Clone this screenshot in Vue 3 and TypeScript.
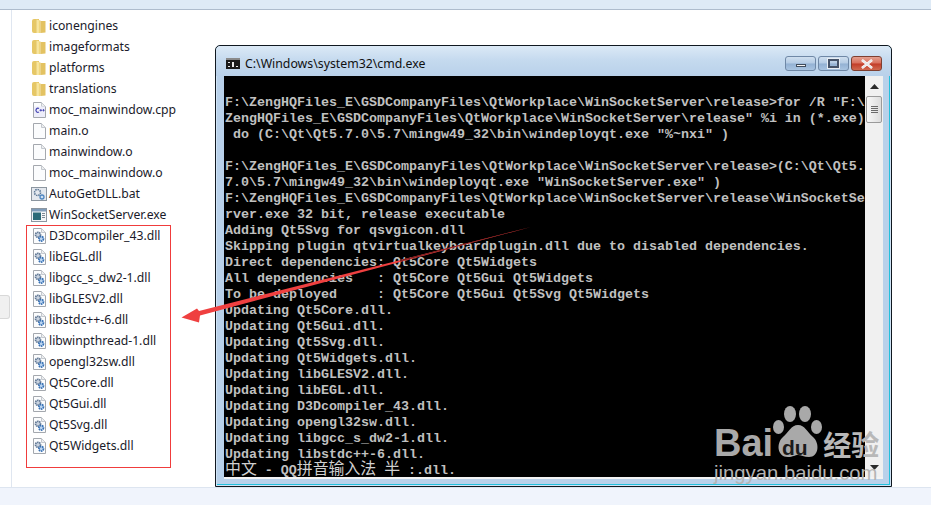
<script setup lang="ts">
type Kind = 'folder' | 'cpp' | 'blank' | 'bat' | 'exe' | 'dll'
interface Entry { name: string; kind: Kind }

const plainFiles: Entry[] = [
  { name: 'iconengines', kind: 'folder' },
  { name: 'imageformats', kind: 'folder' },
  { name: 'platforms', kind: 'folder' },
  { name: 'translations', kind: 'folder' },
  { name: 'moc_mainwindow.cpp', kind: 'cpp' },
  { name: 'main.o', kind: 'blank' },
  { name: 'mainwindow.o', kind: 'blank' },
  { name: 'moc_mainwindow.o', kind: 'blank' },
  { name: 'AutoGetDLL.bat', kind: 'bat' },
  { name: 'WinSocketServer.exe', kind: 'exe' },
]
const dllFiles: Entry[] = [
  'D3Dcompiler_43.dll', 'libEGL.dll', 'libgcc_s_dw2-1.dll', 'libGLESV2.dll', 'libstdc++-6.dll',
  'libwinpthread-1.dll', 'opengl32sw.dll', 'Qt5Core.dll', 'Qt5Gui.dll', 'Qt5Svg.dll', 'Qt5Widgets.dll',
].map((name) => ({ name, kind: 'dll' as Kind }))

const base = 'F:\\ZengHQFiles_E\\GSDCompanyFiles\\QtWorkplace\\WinSocketServer\\release'
const consoleLines: string[] = [
  '',
  base + '>for /R "F:\\',
  'ZengHQFiles_E\\GSDCompanyFiles\\QtWorkplace\\WinSocketServer\\release" %i in (*.exe)',
  ' do (C:\\Qt\\Qt5.7.0\\5.7\\mingw49_32\\bin\\windeployqt.exe "%~nxi" )',
  '',
  base + '>(C:\\Qt\\Qt5.',
  '7.0\\5.7\\mingw49_32\\bin\\windeployqt.exe "WinSocketServer.exe" )',
  base + '\\WinSocketSe',
  'rver.exe 32 bit, release executable',
  'Adding Qt5Svg for qsvgicon.dll',
  'Skipping plugin qtvirtualkeyboardplugin.dll due to disabled dependencies.',
  'Direct dependencies: Qt5Core Qt5Widgets',
  'All dependencies   : Qt5Core Qt5Gui Qt5Widgets',
  'To be deployed     : Qt5Core Qt5Gui Qt5Svg Qt5Widgets',
  'Updating Qt5Core.dll.',
  'Updating Qt5Gui.dll.',
  'Updating Qt5Svg.dll.',
  'Updating Qt5Widgets.dll.',
  'Updating libGLESV2.dll.',
  'Updating libEGL.dll.',
  'Updating D3Dcompiler_43.dll.',
  'Updating opengl32sw.dll.',
  'Updating libgcc_s_dw2-1.dll.',
  'Updating libstdc++-6.dll.',
]
</script>

<template>
  <div class="page">
    <div class="top-strip"></div>
    <div class="explorer">
      <div class="nav-pane"><div class="nav-knob"></div></div>
      <div class="file-pane">
        <template v-for="group in [plainFiles, dllFiles]" :key="group[0].name">
          <div :class="group === dllFiles ? 'dll-box' : 'plain-list'">
            <div v-for="f in group" :key="f.name" class="row">
              <svg class="icon" viewBox="0 0 16 16" width="16" height="16">
                <defs>
                  <linearGradient id="folderFill" x1="0" x2="1" y1="0" y2="0">
                    <stop offset="0" stop-color="#e9cd72" />
                    <stop offset="0.45" stop-color="#fbeeb2" />
                    <stop offset="0.6" stop-color="#f6e08e" />
                    <stop offset="1" stop-color="#e6c868" />
                  </linearGradient>
                </defs>
                <template v-if="f.kind === 'folder'">
                  <path d="M1 3 Q1 1 3 1 L8 1 L8 15 L3 15 Q1 15 1 13 Z" fill="#e6c766" />
                  <path d="M5 1.5 L9.5 2.5 L9.5 15 L5 15 Z" fill="url(#folderFill)" />
                  <path d="M9.5 3 L14.5 3 L14.5 14.5 L9.5 15 Z" fill="#e3c262" />
                </template>
                <template v-else-if="f.kind === 'bat'">
                  <rect x="0.5" y="1.5" width="15" height="13" fill="#e4e8ee" stroke="#8c96a0" />
                  <circle cx="6.5" cy="6.5" r="3" fill="none" stroke="#5c7896" stroke-width="1.6" stroke-dasharray="1.5 0.8" />
                  <circle cx="11" cy="11" r="2" fill="#d0e0f2" stroke="#4f86c0" stroke-width="1.3" />
                </template>
                <template v-else-if="f.kind === 'exe'">
                  <rect x="0.5" y="1.5" width="15" height="13" fill="#f4f6f8" stroke="#8c96a0" />
                  <rect x="1" y="2" width="14" height="2.5" fill="#7f9cba" />
                  <rect x="2" y="5.5" width="8" height="7.5" fill="#2c6a78" />
                  <path d="M11 6.5h3M11 8.5h3M11 10.5h3" stroke="#7c8894" />
                </template>
                <template v-else>
                  <path d="M2.5 0.5 H10.5 L14.5 4.5 V15.5 H2.5 Z" fill="#fbfcfd" stroke="#a4a8ae" />
                  <path d="M10.5 0.5 V4.5 H14.5" fill="#eceef0" stroke="#c4c8ce" />
                  <template v-if="f.kind === 'cpp'">
                    <rect x="3" y="4.5" width="11" height="10.5" fill="#eeeefa" />
                    <path d="M8 6.6 A2 2 0 1 0 8 10" fill="none" stroke="#4646b4" stroke-width="1.2" />
                    <path d="M8.6 8.3h2.4M9.8 7.2v2.2M11.4 8.3h2.2M12.5 7.2v2.2" stroke="#4646b4" />
                  </template>
                  <template v-else-if="f.kind === 'dll'">
                    <circle cx="7" cy="6.8" r="2.5" fill="#c9d3e0" stroke="#5f7692" stroke-width="1.7" stroke-dasharray="1.5 0.6" />
                    <circle cx="10.2" cy="10.8" r="2.3" fill="#bcd5f0" stroke="#3670b4" stroke-width="1.7" stroke-dasharray="1.5 0.6" />
                  </template>
                </template>
              </svg>
              <span class="name">{{ f.name }}</span>
            </div>
          </div>
        </template>
      </div>
    </div>
    <div class="status-strip"></div>

    <section class="cmd">
      <header class="cmd-title">
        <svg class="cmd-icon" viewBox="0 0 14 11" width="14" height="11">
          <rect width="14" height="11" fill="#1a1a1a" />
          <rect x="0" y="0" width="14" height="2" fill="#8a8a8a" />
          <path d="M2 4h2v1H2v3h2v1H2M6 4h2v5H6zM10 8h2v1h-2z" fill="#e8e8e8" />
        </svg>
        <span class="cmd-caption">C:\Windows\system32\cmd.exe</span>
        <div class="cmd-buttons">
          <div class="win-btn">
            <span class="glyph-min"></span>
          </div>
          <div class="win-btn">
            <span class="glyph-max"></span>
          </div>
          <div class="win-btn win-close">
            <svg viewBox="0 0 14 10" width="14" height="10">
              <path d="M2 1 L12 9 M12 1 L2 9" stroke="#fff" stroke-width="2.6" />
              <path d="M2 1 L12 9 M12 1 L2 9" stroke="#e8e8e8" stroke-width="1.6" />
            </svg>
          </div>
        </div>
      </header>
      <div class="cmd-client">
        <div class="cmd-text">
          <div v-for="(line, i) in consoleLines" :key="i" class="cmd-line">{{ line }}</div>
          <div class="cmd-line ime"><span class="cjk">中文</span> - QQ<span class="cjk">拼音输入法</span> <span class="cjk">半</span> :.dll.</div>
        </div>
        <div class="scrollbar">
          <svg class="sb-arrow" viewBox="0 0 9 5" width="9" height="5"><path d="M4.5 0 L9 5 H0 Z" fill="#2a2a2a" /></svg>
          <div class="sb-thumb">
            <span></span><span></span><span></span><span></span>
          </div>
          <div class="sb-track"></div>
          <svg class="sb-arrow" viewBox="0 0 9 5" width="9" height="5"><path d="M0 0 H9 L4.5 5 Z" fill="#2a2a2a" /></svg>
        </div>
      </div>
    </section>

    <svg class="annot" viewBox="0 0 931 505" width="931" height="505">
      <polygon points="531,227 199,311 197,308.5 181.5,317.5 199,322.5 200,315.5" fill="#ef4040" />
      <polygon points="531,227 400,260 400,261.5" fill="#7c2020" />
    </svg>

    <div class="watermark">
      <div class="wm-logo">
        <span class="wm-bai">Bai</span>
        <svg class="wm-paw" viewBox="0 0 50 54" width="50" height="54">
          <ellipse cx="17" cy="8" rx="6" ry="8" fill="#a9a9a9" />
          <ellipse cx="32" cy="8" rx="6" ry="8" fill="#a9a9a9" />
          <ellipse cx="5.5" cy="21" rx="5.5" ry="7" fill="#a9a9a9" />
          <ellipse cx="43.5" cy="21" rx="5.5" ry="7" fill="#a9a9a9" />
          <path d="M25 19 C18 19 16 26 10 31 C3 37 4 51 15 51 C20 51 22 49 25 49 C28 49 31 51 36 51 C46 51 47 37 40 31 C34 26 32 19 25 19 Z" fill="#a9a9a9" />
        </svg>
        <span class="wm-du">du</span>
        <span class="wm-cn">经验</span>
      </div>
      <div class="wm-url">jingyan.baidu.com</div>
    </div>
  </div>
</template>

<style>
html, body { margin: 0; padding: 0; background: #fff; }
</style>

<style scoped>
.page {
  position: relative;
  width: 931px;
  height: 505px;
  overflow: hidden;
  display: flex;
  flex-direction: column;
  background: #fff;
  font-family: "Noto Sans", "Liberation Sans", sans-serif;
}
.top-strip {
  height: 9px;
  background: #deeaf6;
  border-bottom: 1px solid #aebccd;
}
.explorer { flex: 1; display: flex; min-height: 0; }
.nav-pane {
  width: 11px;
  border-right: 1px solid #dfe6f0;
  padding-top: 285px;
  box-sizing: content-box;
}
.nav-knob {
  width: 9px;
  height: 22px;
  background: #f0f0f0;
  border: 1px solid #d8d8d8;
  border-left: none;
  border-radius: 0 3px 3px 0;
}
.file-pane {
  padding: 5px 0 0 14px;
  display: flex;
  flex-direction: column;
}
.plain-list { padding-left: 5px; }
.dll-box {
  width: 138px;
  height: 241px;
  border: 1px solid #f03c3c;
  padding-left: 5px;
  box-sizing: content-box;
}
.row {
  height: 21px;
  display: flex;
  align-items: center;
  gap: 2px;
  margin-left: -1px;
}
.dll-box .row:first-child { margin-top: -1px; }
.plain-list .row { margin-left: 0; }
.icon { flex: none; }
.name {
  font-size: 12.2px;
  line-height: 21px;
  color: #1a1a2a;
  white-space: nowrap;
}
.status-strip {
  height: 17px;
  background: #f0f4fc;
  border-top: 1px solid #dde5f0;
}
.cmd {
  position: absolute;
  left: 215px;
  top: 45px;
  width: 675px;
  height: 440px;
  background: #b9d1ea;
  border: 1px solid #101820;
  border-radius: 5px 5px 0 0;
  box-shadow: inset 0 0 0 1px #cfe3f5, inset -1px -1px 0 1px #22c0dc;
  display: flex;
  flex-direction: column;
  box-sizing: content-box;
}
.cmd-title {
  height: 30px;
  box-sizing: border-box;
  display: flex;
  align-items: center;
  padding: 4px 9px 0 10px;
  background: linear-gradient(180deg, #dbe9f6 0%, #c4d9ee 50%, #b9d1ea 100%);
  border-radius: 5px 5px 0 0;
}
.cmd-icon { flex: none; }
.cmd-caption {
  margin-left: 5px;
  font-size: 12.3px;
  color: #101010;
  flex: 1;
}
.cmd-buttons { display: flex; gap: 2px; margin-top: 1px; }
.win-btn {
  width: 31px;
  height: 15px;
  box-sizing: border-box;
  border: 1px solid #6f88a6;
  border-radius: 3px;
  background: linear-gradient(180deg, #cfdfef 0%, #b4cbe4 48%, #93b1d3 52%, #a9c4e1 100%);
  display: flex;
  align-items: center;
  justify-content: center;
}
.glyph-min {
  width: 10px;
  height: 3px;
  margin-top: 4px;
  background: #f4f4f4;
  border: 1px solid #404c5c;
  box-sizing: border-box;
}
.glyph-max {
  width: 11px;
  height: 9px;
  border: 2px solid #46546a;
  box-shadow: 0 0 0 1px #e8eef4;
  box-sizing: border-box;
}
.win-close {
  border-color: #7f3f30;
  background: linear-gradient(180deg, #e4a090 0%, #d9705c 48%, #c23c28 52%, #d06a50 100%);
}
.cmd-client {
  margin: 0 8px 0 8px;
  height: 401px;
  display: flex;
  border-bottom: 2px solid #f4f4f4;
  box-sizing: content-box;
}
.cmd-text {
  width: 641px;
  height: 401px;
  background: #000;
  box-sizing: border-box;
  padding: 3px 0 0 1px;
}
.cmd-line {
  height: 16px;
  line-height: 16px;
  font-family: "Liberation Mono", monospace;
  font-size: 13.33px;
  font-weight: 700;
  color: #c0c0c0;
  white-space: pre;
}
.ime {
  height: 14px;
  line-height: 14px;
}
.cjk {
  position: relative;
  top: -2px;
  vertical-align: -2px;
  font-family: "Noto Sans CJK SC", sans-serif;
  font-size: 15.9px;
  font-weight: 400;
  line-height: 14px;
  color: #d0d0d0;
}
.scrollbar {
  flex: 1;
  background: #f0f0f0;
  display: flex;
  flex-direction: column;
  align-items: center;
  padding: 8px 0 7px;
  box-sizing: border-box;
}
.sb-arrow { flex: none; }
.sb-thumb {
  margin-top: 7px;
  width: 16px;
  height: 27px;
  box-sizing: border-box;
  border: 1px solid #9a9a9a;
  border-radius: 2px;
  background: linear-gradient(90deg, #f8f8f8, #dcdcdc);
  display: flex;
  flex-direction: column;
  align-items: center;
  justify-content: center;
  gap: 1px;
}
.sb-thumb span { width: 7px; height: 1px; background: #6a6a6a; }
.sb-track { flex: 1; }
.annot {
  position: absolute;
  left: 0;
  top: 0;
  pointer-events: none;
}
.watermark {
  position: absolute;
  left: 714px;
  top: 406px;
  width: 170px;
  pointer-events: none;
}
.wm-logo {
  position: relative;
  display: flex;
  align-items: flex-end;
  height: 54px;
}
.wm-bai {
  font-family: "Liberation Sans", sans-serif;
  font-weight: 700;
  font-size: 38px;
  line-height: 42px;
  color: #a9a9a9;
  margin-bottom: -4px;
}
.wm-paw { flex: none; }
.wm-du {
  position: absolute;
  left: 68px;
  top: 33px;
  font-family: "Liberation Sans", sans-serif;
  font-weight: 700;
  font-size: 21px;
  line-height: 18px;
  color: #1a1a1a;
}
.wm-cn {
  font-family: "Noto Sans CJK SC", sans-serif;
  font-weight: 700;
  font-size: 28px;
  line-height: 34px;
  color: #b8b8b8;
  margin-bottom: -1px;
}
.wm-url {
  font-family: "Liberation Sans", sans-serif;
  font-size: 20.3px;
  line-height: 20px;
  color: #b4b4b4;
  margin-top: 3px;
  white-space: nowrap;
}
</style>
